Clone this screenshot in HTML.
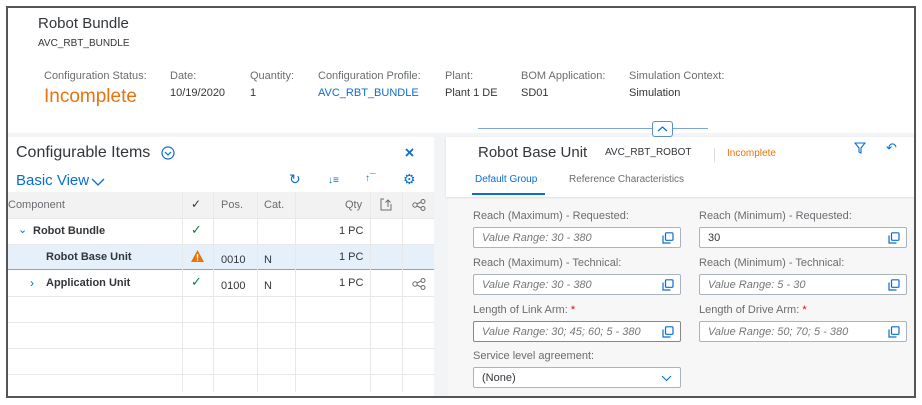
<!DOCTYPE html>
<html><head><meta charset="utf-8"><style>
*{box-sizing:border-box;margin:0;padding:0}
body{width:922px;height:405px;background:#fff;font-family:"Liberation Sans",sans-serif;position:relative;overflow:hidden;color:#32363a}
.a{position:absolute;white-space:nowrap}
.frame{position:absolute;left:6px;top:6px;width:910px;height:392px;border:2px solid #555;background:#f3f4f5;overflow:hidden}
.lbl{font-size:11px;color:#6a6d70}
.val{font-size:11px;color:#32363a}
.inp{position:absolute;height:21px;background:#fff;border:1px solid #a9b4be;border-radius:2px;font-size:11px;font-style:italic;color:#74777a;padding:4px 8px}
.cp{position:absolute;right:6px;top:4px}
.fl{position:absolute;font-size:11px;color:#6a6d70}
.vl{position:absolute;top:192px;width:1px;height:200px;background:#e8e8e8}
.hl{position:absolute;left:0;width:426px;height:1px;background:#e8e8e8}
.tb{font-size:11px;font-weight:bold;color:#32363a}
</style></head><body>
<svg width="0" height="0" style="position:absolute"><defs>
<symbol id="cp" viewBox="0 0 12 12"><rect x="3.5" y="0.8" width="7.5" height="7.5" rx="1" fill="none" stroke="#0a6ed1" stroke-width="1.2"/><path d="M1 3.5v7.5h7.5" fill="none" stroke="#0a6ed1" stroke-width="1.2"/></symbol>
<symbol id="sh" viewBox="0 0 14 12"><circle cx="3" cy="6" r="2.2" fill="none" stroke="#6a6d70"/><circle cx="11" cy="2.5" r="2" fill="none" stroke="#6a6d70"/><circle cx="11" cy="9.5" r="2" fill="none" stroke="#6a6d70"/><path d="M5 5l4-2M5 7l4 2" stroke="#6a6d70"/></symbol>
</defs></svg>
<div class="frame">
<div class="a" style="left:0;top:0;width:906px;height:125px;background:#fff"></div>
<div class="a" style="left:30px;top:7px;font-size:15px;color:#32363a">Robot Bundle</div>
<div class="a" style="left:30px;top:30px;font-size:10px;color:#32363a">AVC_RBT_BUNDLE</div>
<div class="a lbl" style="left:36px;top:62px">Configuration Status:</div>
<div class="a" style="left:36px;top:78px;font-size:19px;color:#e9730c">Incomplete</div>
<div class="a lbl" style="left:162px;top:62px">Date:</div><div class="a val" style="left:162px;top:79px">10/19/2020</div>
<div class="a lbl" style="left:242px;top:62px">Quantity:</div><div class="a val" style="left:242px;top:79px">1</div>
<div class="a lbl" style="left:310px;top:62px">Configuration Profile:</div><div class="a val" style="left:310px;top:79px;color:#0a6ed1">AVC_RBT_BUNDLE</div>
<div class="a lbl" style="left:437px;top:62px">Plant:</div><div class="a val" style="left:437px;top:79px">Plant 1 DE</div>
<div class="a lbl" style="left:513px;top:62px">BOM Application:</div><div class="a val" style="left:513px;top:79px">SD01</div>
<div class="a lbl" style="left:621px;top:62px">Simulation Context:</div><div class="a val" style="left:621px;top:79px">Simulation</div>
<div class="a" style="left:0;top:129px;width:426px;height:270px;background:#fff"></div>
<div class="a" style="left:8px;top:136px;font-size:16px;color:#32363a">Configurable Items</div>
<svg class="a" style="left:153px;top:138px" width="14" height="14"><circle cx="7" cy="7" r="6" fill="none" stroke="#0a6ed1" stroke-width="1.2"/><path d="M4 6l3 3 3-3" fill="none" stroke="#0a6ed1" stroke-width="1.2"/></svg>
<svg class="a" style="left:397px;top:140px" width="9" height="9"><path d="M1 1l7 7M8 1l-7 7" stroke="#0a6ed1" stroke-width="1.8"/></svg>
<div class="a" style="left:8px;top:164px;font-size:15px;color:#0a6ed1">Basic View</div>
<svg class="a" style="left:83px;top:169px" width="14" height="10"><path d="M1 2l6 6 6-6" fill="none" stroke="#0a6ed1" stroke-width="1.3"/></svg>
<div class="a" style="left:281px;top:163px;font-size:14px;color:#0a6ed1">↻</div>
<div class="a" style="left:320px;top:167px;font-size:10px;color:#0a6ed1">↓≡</div>
<div class="a" style="left:357px;top:165px;font-size:10px;color:#0a6ed1">↑¯</div>
<div class="a" style="left:395px;top:163px;font-size:14px;color:#0a6ed1">⚙</div>
<div class="a" style="left:0;top:184px;width:426px;height:26px;background:#f2f2f2"></div>
<div class="a" style="left:0;top:236px;width:426px;height:26px;background:#e5f0fa;border-bottom:1px solid #7fa7d6"></div>
<div class="hl" style="top:210px"></div><div class="hl" style="top:236px"></div><div class="hl" style="top:288px"></div><div class="hl" style="top:314px"></div><div class="hl" style="top:340px"></div><div class="hl" style="top:366px"></div>
<div class="vl" style="left:174px;top:184px"></div><div class="vl" style="left:205px;top:184px"></div><div class="vl" style="left:249px;top:184px"></div><div class="vl" style="left:287px;top:184px"></div><div class="vl" style="left:362px;top:184px"></div><div class="vl" style="left:394px;top:184px"></div>
<div class="a" style="left:0;top:191px;font-size:11px;color:#6a6d70">Component</div>
<div class="a" style="left:183px;top:189px;font-size:12px">✓</div>
<div class="a" style="left:213px;top:191px;font-size:11px;color:#6a6d70">Pos.</div>
<div class="a" style="left:256px;top:191px;font-size:11px;color:#6a6d70">Cat.</div>
<div class="a" style="left:337px;top:191px;font-size:11px;color:#6a6d70">Qty</div>
<svg class="a" style="left:372px;top:190px" width="12" height="13"><path d="M4 1H1v11h10V6" fill="none" stroke="#6a6d70"/><path d="M8 9V2M5.5 4.5L8 2l2.5 2.5" fill="none" stroke="#6a6d70"/></svg>
<svg class="a" style="left:404px;top:191px" width="14" height="12"><use href="#sh"/></svg>
<div class="a" style="left:10px;top:215px;font-size:11px;color:#0a6ed1">⌄</div>
<div class="a tb" style="left:25px;top:217px">Robot Bundle</div>
<div class="a" style="left:183px;top:214px;font-size:13px;color:#107e3e">✓</div>
<div class="a" style="left:331px;top:217px;font-size:11px">1 PC</div>
<div class="a tb" style="left:38px;top:243px">Robot Base Unit</div>
<svg class="a" style="left:183px;top:242px" width="13" height="12"><path d="M6.5 0L13 12H0z" fill="#e9730c"/><rect x="5.8" y="4" width="1.4" height="4.5" fill="#fff"/><rect x="5.8" y="9.3" width="1.4" height="1.4" fill="#fff"/></svg>
<div class="a" style="left:213px;top:246px;font-size:11px">0010</div><div class="a" style="left:256px;top:246px;font-size:11px">N</div>
<div class="a" style="left:331px;top:243px;font-size:11px">1 PC</div>
<div class="a" style="left:22px;top:268px;font-size:12px;color:#0a6ed1">›</div>
<div class="a tb" style="left:38px;top:269px">Application Unit</div>
<div class="a" style="left:183px;top:266px;font-size:13px;color:#107e3e">✓</div>
<div class="a" style="left:213px;top:272px;font-size:11px">0100</div><div class="a" style="left:256px;top:272px;font-size:11px">N</div>
<div class="a" style="left:331px;top:269px;font-size:11px">1 PC</div>
<svg class="a" style="left:404px;top:270px" width="14" height="12"><use href="#sh"/></svg>
<div class="a" style="left:440px;top:139px;width:470px;height:270px;background:#f7f7f7"></div>
<div class="a" style="left:438px;top:129px;width:470px;height:60px;background:#fff;box-shadow:0 1px 2px rgba(0,0,0,.1)"></div>
<div class="a" style="left:470px;top:120px;width:230px;height:1px;background:#7fa7d6"></div>
<div class="a" style="left:644px;top:113px;width:21px;height:16px;background:#fff;border:1px solid #5b8fc9;border-radius:3px"></div>
<svg class="a" style="left:649px;top:117px" width="11" height="8"><path d="M1 6l4.5-4 4.5 4" fill="none" stroke="#0a6ed1" stroke-width="1.2"/></svg>
<div class="a" style="left:470px;top:136px;font-size:15px">Robot Base Unit</div>
<div class="a" style="left:597px;top:139px;font-size:10px">AVC_RBT_ROBOT</div>
<div class="a" style="left:706px;top:140px;width:1px;height:14px;background:#ddd"></div>
<div class="a" style="left:719px;top:140px;font-size:10px;color:#e9730c">Incomplete</div>
<svg class="a" style="left:846px;top:134px" width="12" height="12"><path d="M1 1h10L7 6v5L5 10V6z" fill="none" stroke="#0a6ed1" stroke-width="1.1"/></svg>
<div class="a" style="left:878px;top:132px;font-size:13px;color:#0a6ed1">↶</div>
<div class="a" style="left:467px;top:166px;font-size:10px;color:#0a6ed1">Default Group</div>
<div class="a" style="left:464px;top:185px;width:73px;height:2px;background:#0a6ed1"></div>
<div class="a" style="left:561px;top:166px;font-size:10px;color:#6a6d70">Reference Characteristics</div>
<div class="fl" style="left:465px;top:202px">Reach (Maximum) - Requested:</div>
<div class="fl" style="left:691px;top:202px">Reach (Minimum) - Requested:</div>
<div class="inp" style="left:465px;top:219px;width:208px">Value Range: 30 - 380<svg class="cp" width="12" height="12"><use href="#cp"/></svg></div>
<div class="inp" style="left:691px;top:219px;width:208px;font-style:normal;color:#32363a">30<svg class="cp" width="12" height="12"><use href="#cp"/></svg></div>
<div class="fl" style="left:465px;top:249px">Reach (Maximum) - Technical:</div>
<div class="fl" style="left:691px;top:249px">Reach (Minimum) - Technical:</div>
<div class="inp" style="left:465px;top:266px;width:208px">Value Range: 30 - 380<svg class="cp" width="12" height="12"><use href="#cp"/></svg></div>
<div class="inp" style="left:691px;top:266px;width:208px">Value Range: 5 - 30<svg class="cp" width="12" height="12"><use href="#cp"/></svg></div>
<div class="fl" style="left:465px;top:296px">Length of Link Arm:<span style="color:#e00"> *</span></div>
<div class="fl" style="left:691px;top:296px">Length of Drive Arm:<span style="color:#e00"> *</span></div>
<div class="inp" style="left:465px;top:313px;width:208px;border-color:#888">Value Range: 30; 45; 60; 5 - 380<svg class="cp" width="12" height="12"><use href="#cp"/></svg></div>
<div class="inp" style="left:691px;top:313px;width:208px">Value Range: 50; 70; 5 - 380<svg class="cp" width="12" height="12"><use href="#cp"/></svg></div>
<div class="fl" style="left:465px;top:342px">Service level agreement:</div>
<div class="inp" style="left:465px;top:359px;width:208px;font-style:normal;color:#32363a">(None)<svg style="position:absolute;right:8px;top:7px" width="11" height="7"><path d="M1 1l4.5 4.5L10 1" fill="none" stroke="#0a6ed1" stroke-width="1.1"/></svg></div>
</div>
</body></html>
